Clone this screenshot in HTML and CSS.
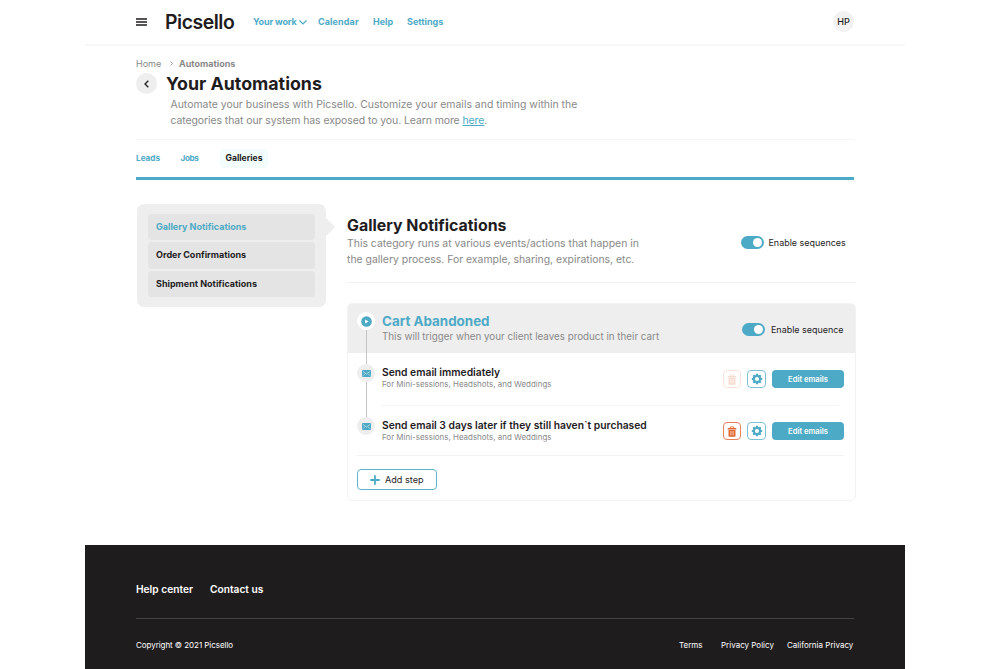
FILE: index.html
```html
<!DOCTYPE html>
<html lang="en">
<head>
    <meta charset="UTF-8">
    <meta name="viewport" content="width=device-width, initial-scale=1.0">
    <title>Your Automations</title>
    <link rel="stylesheet" href="styles.css">
</head>
<body>
    <div class="page">
        <header class="navbar">
            <svg class="menu-icon" width="11" height="8" viewBox="0 0 11 8"><path d="M0 1h11M0 4h11M0 7h11" stroke="#1f1c1e" stroke-width="1.5"/></svg>
            <div class="logo">Picsello</div>
            <nav class="nav-links">
                <a class="nav-work" href="#">Your work</a>
                <svg class="nav-chevron" width="8" height="5" viewBox="0 0 8 5"><path d="M.5.5 4 4 7.5.5" fill="none" stroke="#4daac6" stroke-width="1.2"/></svg>
                <a class="nav-calendar" href="#">Calendar</a>
                <a class="nav-help" href="#">Help</a>
                <a class="nav-settings" href="#">Settings</a>
            </nav>
            <div class="avatar">HP</div>
        </header>

        <section class="intro">
            <div class="breadcrumb">
                <span class="crumb-home">Home</span>
                <svg width="3" height="5" viewBox="0 0 3 5"><path d="M.5.5l2 2-2 2" fill="none" stroke="#898989" stroke-width=".8"/></svg>
                <b class="crumb-current">Automations</b>
            </div>
            <div class="title-row">
                <a class="back-btn" href="#"><svg width="5" height="8" viewBox="0 0 5 8"><path d="M4.3.7 1 4l3.3 3.3" fill="none" stroke="#1f1c1e" stroke-width="1.3"/></svg></a>
                <h1>Your Automations</h1>
            </div>
            <p class="intro-text">Automate your business with Picsello. Customize your emails and timing within the<br><span class="intro-more">categories that our system has exposed to you. Learn more <a href="#">here</a>.</span></p>
        </section>

        <nav class="tabs">
            <a class="tab-leads" href="#">Leads</a>
            <a class="tab-jobs" href="#">Jobs</a>
            <a class="tab-active" href="#">Galleries</a>
        </nav>

        <main class="content">
            <aside class="sidebar">
                <a class="side-item side-active" href="#">Gallery Notifications</a>
                <a class="side-item" href="#">Order Confirmations</a>
                <a class="side-item" href="#">Shipment Notifications</a>
            </aside>

            <div class="main">
                <div class="category">
                    <div>
                        <h2>Gallery Notifications</h2>
                        <p class="category-text">This category runs at various events/actions that happen in<br>the gallery process. For example, sharing, expirations, etc.</p>
                    </div>
                    <div class="toggle-row">
                        <span class="toggle"></span>
                        <span class="toggle-label">Enable sequences</span>
                    </div>
                </div>

                <div class="card">
                    <div class="card-header">
                        <div class="step-icon step-start">
                            <svg width="11" height="11" viewBox="0 0 11 11"><circle cx="5.5" cy="5.5" r="5.3" fill="#4daac6"/><path d="M4.1 3.5v4l3.5-2z" fill="#fff"/></svg>
                        </div>
                        <div class="header-text">
                            <h3>Cart Abandoned</h3>
                            <p>This will trigger when your client leaves product in their cart</p>
                        </div>
                        <div class="toggle-row">
                            <span class="toggle"></span>
                            <span class="toggle-label">Enable sequence</span>
                        </div>
                    </div>

                    <div class="step step-first">
                        <div class="step-icon">
                            <svg width="9" height="7" viewBox="0 0 9 7"><rect width="9" height="7" rx="1" fill="#4daac6"/><path d="M1 1.5 4.5 4 8 1.5M1 5.7l2-2M8 5.7l-2-2" fill="none" stroke="#eee" stroke-width=".6"/></svg>
                        </div>
                        <div class="step-text">
                            <h4>Send email immediately</h4>
                            <p>For Mini-sessions, Headshots, and Weddings</p>
                        </div>
                        <div class="actions">
                            <button class="icon-btn delete-btn disabled"><svg width="10" height="11" viewBox="0 0 10 11"><path d="M.7 2.1h2l.7-1.5h3.2l.7 1.5h2v1.4H.7zM1.5 4h7v6q0 .7-.7.7H2.2q-.7 0-.7-.7zM3.6 1.9h2.8L6 1.3H4z" fill="#e1662f" fill-rule="evenodd"/><path d="M3.9 5v4.3M6.1 5v4.3" stroke="#fff" stroke-width=".7"/></svg></button>
                            <button class="icon-btn settings-btn"><svg width="12" height="12" viewBox="0 0 12 12"><g stroke="#4daac6" stroke-width="2.2"><path d="M6 .8v10.4M.8 6h10.4M2.3 2.3l7.4 7.4M9.7 2.3 2.3 9.7"/></g><circle cx="6" cy="6" r="3.1" fill="#fff" stroke="#4daac6" stroke-width="2"/></svg></button>
                            <button class="edit-btn">Edit emails</button>
                        </div>
                    </div>

                    <div class="step step-second">
                        <div class="step-icon">
                            <svg width="9" height="7" viewBox="0 0 9 7"><rect width="9" height="7" rx="1" fill="#4daac6"/><path d="M1 1.5 4.5 4 8 1.5M1 5.7l2-2M8 5.7l-2-2" fill="none" stroke="#eee" stroke-width=".6"/></svg>
                        </div>
                        <div class="step-text">
                            <h4>Send email 3 days later if they still haven`t purchased</h4>
                            <p>For Mini-sessions, Headshots, and Weddings</p>
                        </div>
                        <div class="actions">
                            <button class="icon-btn delete-btn"><svg width="10" height="11" viewBox="0 0 10 11"><path d="M.7 2.1h2l.7-1.5h3.2l.7 1.5h2v1.4H.7zM1.5 4h7v6q0 .7-.7.7H2.2q-.7 0-.7-.7zM3.6 1.9h2.8L6 1.3H4z" fill="#e1662f" fill-rule="evenodd"/><path d="M3.9 5v4.3M6.1 5v4.3" stroke="#fff" stroke-width=".7"/></svg></button>
                            <button class="icon-btn settings-btn"><svg width="12" height="12" viewBox="0 0 12 12"><g stroke="#4daac6" stroke-width="2.2"><path d="M6 .8v10.4M.8 6h10.4M2.3 2.3l7.4 7.4M9.7 2.3 2.3 9.7"/></g><circle cx="6" cy="6" r="3.1" fill="#fff" stroke="#4daac6" stroke-width="2"/></svg></button>
                            <button class="edit-btn">Edit emails</button>
                        </div>
                    </div>

                    <button class="add-btn">
                        <svg width="10" height="10" viewBox="0 0 10 10"><path d="M5 .3v9.4M.3 5h9.4" stroke="#4daac6" stroke-width="1.8"/></svg>
                        <span>Add step</span>
                    </button>
                </div>
            </div>
        </main>

        <footer class="footer">
            <div class="footer-links">
                <a class="footer-help" href="#">Help center</a>
                <a href="#">Contact us</a>
            </div>
            <div class="footer-bottom">
                <span class="copyright">Copyright © 2021 Picsello</span>
                <div class="legal">
                    <a class="legal-terms" href="#">Terms</a>
                    <a class="legal-privacy" href="#">Privacy Policy</a>
                    <a href="#">California Privacy</a>
                </div>
            </div>
        </footer>
    </div>
</body>
</html>
```
FILE: styles.css
```css
* {
    box-sizing: border-box;
}
body {
    margin: 0;
    background-color: #fff;
    color: #1f1c1e;
    font-family: Inter, "Liberation Sans", sans-serif;
    overflow: hidden;
}
h1, h2, h3, h4, p {
    margin: 0;
}
a {
    color: #4daac6;
    text-decoration: none;
    white-space: nowrap;
}
svg {
    display: block;
    flex: none;
}
button {
    padding: 0;
    font-family: inherit;
    cursor: pointer;
}
.page {
    width: 820px;
    height: 669px;
    margin: 0 auto;
    display: flex;
    flex-direction: column;
}

/* Top bar */
.navbar {
    display: flex;
    align-items: center;
    height: 46px;
    padding: 0 51px 1px;
    border-bottom: 2px solid #f7f7f7;
}
.logo {
    width: 88px;
    margin-left: 18px;
    padding-top: 1px;
    font-size: 19.4px;
    font-weight: 600;
    line-height: 24px;
    letter-spacing: -0.45px;
}
.nav-links {
    display: flex;
    align-items: center;
    padding-top: 1px;
    font-size: 9px;
    font-weight: 700;
    line-height: 14px;
}
.nav-work {
    width: 46px;
    letter-spacing: -0.1px;
}
.nav-calendar {
    width: 55px;
    margin-left: 11px;
    letter-spacing: 0.1px;
}
.nav-help {
    width: 34px;
}
.avatar {
    width: 21px;
    height: 21px;
    margin-left: auto;
    border-radius: 50%;
    background-color: #f2f2f2;
    font-size: 9px;
    font-weight: 500;
    line-height: 21px;
    text-align: center;
}

/* Page heading */
.intro {
    height: 94px;
    margin: 0 51px;
    padding-top: 10px;
    border-bottom: 1px solid #f5f5f5;
}
.breadcrumb {
    display: flex;
    align-items: center;
    height: 14px;
    color: #898989;
    font-size: 9px;
}
.crumb-home {
    width: 34px;
}
.crumb-current {
    margin-left: 6px;
}
.title-row {
    display: flex;
    align-items: center;
    height: 27px;
}
.back-btn {
    display: flex;
    align-items: center;
    justify-content: center;
    width: 21px;
    height: 21px;
    margin-right: 9px;
    border-radius: 50%;
    background-color: #eee;
}
h1 {
    font-size: 17.8px;
    line-height: 26px;
    white-space: nowrap;
}
.intro-text {
    padding-left: 34.5px;
    color: #898989;
    font-size: 10.45px;
    line-height: 15.5px;
    white-space: nowrap;
}
.intro-more {
    letter-spacing: -0.07px;
}
.intro-text a {
    text-decoration: underline;
}

/* Tabs */
.tabs {
    display: flex;
    align-items: center;
    height: 40px;
    margin: 0 51px;
    padding-bottom: 1px;
    border-bottom: 3px solid #4daac6;
    font-size: 8.2px;
    font-weight: 700;
}
.tab-leads {
    width: 44.5px;
}
.tab-jobs {
    width: 39.5px;
    letter-spacing: -0.4px;
}
.tab-active {
    width: 48px;
    border-radius: 4px;
    background-color: #f2fdfb;
    color: #1f1c1e;
    font-size: 8.6px;
    line-height: 19px;
    text-align: center;
}

/* Category menu and sequence list */
.content {
    display: flex;
    height: 365px;
    padding: 24px 49px 0 52px;
}
.sidebar {
    position: relative;
    display: flex;
    flex-direction: column;
    gap: 2px;
    width: 189px;
    height: 103px;
    padding: 10px 11px;
    border-radius: 7px;
    background-color: #eee;
}
.sidebar::after {
    content: "";
    position: absolute;
    top: 14px;
    left: 189px;
    border: 9px solid transparent;
    border-left-color: #eee;
    border-right-width: 0;
}
.side-item {
    height: 26.5px;
    padding-left: 8px;
    border-radius: 4px;
    background-color: #e4e4e4;
    color: #1f1c1e;
    font-size: 9px;
    font-weight: 700;
    line-height: 25px;
}
.side-active {
    color: #4daac6;
}
.main {
    width: 509px;
    margin-left: 21px;
}
.category {
    display: flex;
    justify-content: space-between;
    height: 79px;
    padding: 10px 10px 0 0;
    border-bottom: 1px solid #f3f3f3;
}
h2 {
    font-size: 15.9px;
    line-height: 23px;
}
.category-text {
    margin-top: -1px;
    color: #898989;
    font-size: 10.43px;
    line-height: 15.5px;
    white-space: nowrap;
}
.toggle-row {
    display: flex;
    align-items: center;
    height: 14px;
    white-space: nowrap;
}
.category .toggle-row {
    width: 105px;
    margin-top: 21px;
}
.toggle {
    flex: none;
    width: 23px;
    height: 13px;
    padding: 2px 2px 2px 12px;
    border-radius: 7px;
    background-color: #4daac6;
}
.toggle::before {
    content: "";
    display: block;
    width: 9px;
    height: 9px;
    border-radius: 50%;
    background-color: #fff;
}
.toggle-label {
    margin-left: 4.5px;
    font-size: 8.95px;
}
.card {
    height: 198px;
    margin-top: 20px;
    border: 1px solid #f3f3f3;
    border-radius: 5px;
    overflow: hidden;
}
.card-header {
    display: flex;
    height: 49px;
    padding: 8px 10px 0 9px;
    background-color: #eee;
}
.step-icon {
    position: relative;
    display: flex;
    align-items: center;
    justify-content: center;
    flex: none;
    width: 18px;
    height: 18px;
    margin-right: 7px;
    border-radius: 50%;
    background-color: #eee;
}
.step-start {
    background-color: #fff;
}
/* Line down to the next step */
.step-start::after, .step-first .step-icon::after {
    content: "";
    position: absolute;
    top: 18px;
    left: 9px;
    width: 1px;
    height: 34px;
    background-color: #c4c4c4;
}
.step-first .step-icon::after {
    height: 36px;
}
h3 {
    color: #4daac6;
    font-size: 13.4px;
    line-height: 18px;
}
.header-text p {
    color: #898989;
    font-size: 9.8px;
    line-height: 13px;
    white-space: nowrap;
}
.card-header .toggle-row {
    width: 103px;
    margin-top: 10px;
    margin-left: auto;
}
.card-header .toggle-label {
    margin-left: 6px;
}
.step {
    display: flex;
    margin-left: 9px;
    margin-right: 11px;
}
.step-first {
    height: 53px;
    padding-top: 11px;
}
.step-second {
    height: 50px;
    padding-top: 11px;
    border-bottom: 1px solid #f3f3f3;
}
.step-text {
    flex: 1;
    padding-top: 1px;
    white-space: nowrap;
}
.step-first .step-text {
    height: 42px;
    border-bottom: 1px solid #f5f5f5;
}
h4 {
    font-size: 10.3px;
    font-weight: 600;
    line-height: 15px;
}
.step-text p {
    color: #898989;
    font-size: 7.95px;
    line-height: 9px;
}
.actions {
    display: flex;
    gap: 6px;
    width: 121px;
    margin-top: 5px;
}
/* The divider stops a little short of the button edge */
.step-first .actions {
    height: 36px;
    margin-top: 6px;
    background: linear-gradient(#f5f5f5, #f5f5f5) left bottom / 116px 1px no-repeat;
}
.icon-btn {
    display: flex;
    align-items: center;
    justify-content: center;
    flex: none;
    width: 18px;
    height: 18px;
    border: 1px solid #7cc1d5;
    border-radius: 4px;
    background-color: #fff;
}
.delete-btn {
    border-color: #e98258;
}
.disabled {
    opacity: 0.22;
}
.settings-btn {
    width: 19px;
}
.edit-btn {
    width: 72px;
    height: 18px;
    border: 0;
    border-radius: 4px;
    background-color: #4daac6;
    color: #fff;
    font-size: 7.6px;
    font-weight: 600;
}
.add-btn {
    display: flex;
    align-items: center;
    gap: 5px;
    width: 80px;
    height: 21px;
    margin: 13px 0 0 9px;
    padding: 0 0 0 12px;
    border: 1px solid #5fb3cc;
    border-radius: 4px;
    background-color: #fff;
    color: #1f1c1e;
    font-size: 9.1px;
    white-space: nowrap;
}

/* Footer */
.footer {
    height: 124px;
    padding: 0 51px;
    background-color: #1f1c1e;
}
.footer a {
    color: #fff;
}
.footer-links {
    display: flex;
    height: 74px;
    padding-top: 36px;
    border-bottom: 1px solid #444243;
    font-size: 10.2px;
    font-weight: 600;
    line-height: 16px;
}
.footer-help {
    width: 74px;
}
.footer-bottom {
    display: flex;
    justify-content: space-between;
    padding-top: 20px;
    color: #fff;
    font-size: 8px;
    line-height: 12px;
    white-space: nowrap;
}
.copyright {
    letter-spacing: -0.06px;
}
.legal {
    display: flex;
    width: 175px;
}
.legal-terms {
    width: 42px;
}
.legal-privacy {
    width: 66px;
}
```
